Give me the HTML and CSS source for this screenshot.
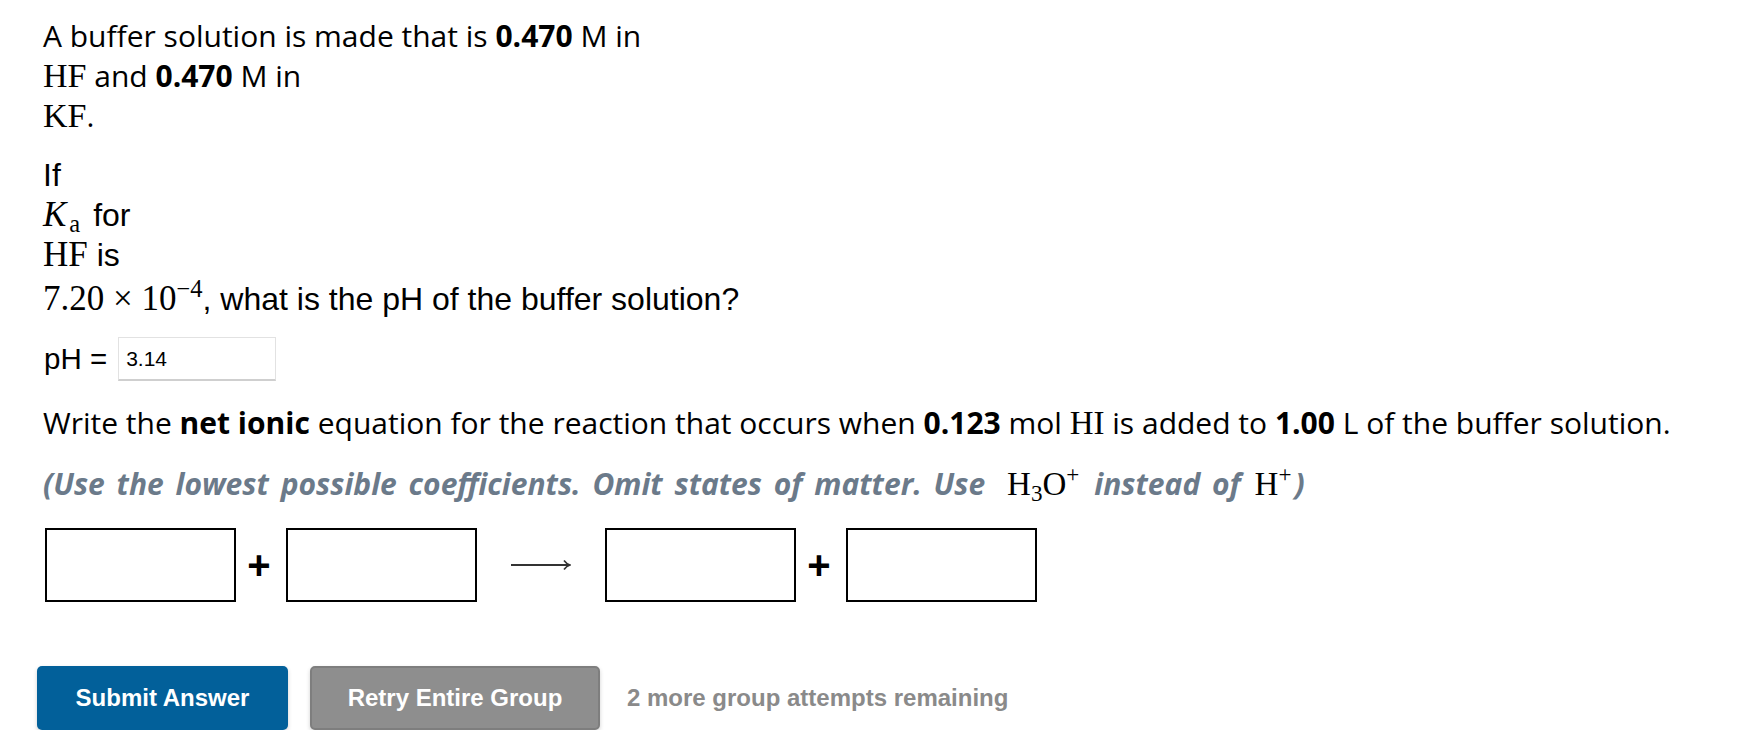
FILE: index.html
```html
<!DOCTYPE html>
<html>
<head>
<meta charset="utf-8">
<link rel="stylesheet" href="styles.css">
</head>
<body>
<div class="page">
  <div class="intro">
    <div class="line">A buffer solution is made that is <b>0.470</b> M in</div>
    <div class="line"><span class="m">HF</span> and <b>0.470</b> M in</div>
    <div class="line"><span class="m">KF</span>.</div>
  </div>
  <div class="question">
    <div class="line">If</div>
    <div class="line"><span class="mq"><i>K</i><sub>a</sub></span> for</div>
    <div class="line"><span class="mq">HF</span> is</div>
    <div class="line"><span class="mq">7.20 × 10<sup>−4</sup></span>, what is the pH of the buffer solution?</div>
  </div>
  <div class="phrow">
    <span class="phlabel">pH =</span>
    <span class="phinput">3.14</span>
  </div>
  <div class="write">Write the <b>net ionic</b> equation for the reaction that occurs when <b>0.123</b> mol <span class="mw">HI</span> is added to <b>1.00</b> L of the buffer solution.</div>
  <div class="hint">(Use the lowest possible coefficients. Omit states of matter. Use <span class="mh mh1">H<sub>3</sub>O<sup>+</sup></span>instead of <span class="mh mh2">H<sup>+</sup></span>)</div>
  <div class="equation">
    <div class="box"></div>
    <div class="plus">+</div>
    <div class="box"></div>
    <div class="arrow">
      <svg width="60" height="14" viewBox="0 0 60 14"><path d="M0 7 H58" stroke="#333" stroke-width="1.8" fill="none"/><path d="M53 2.5 Q55.5 6 59 7 Q55.5 8 53 11.5" stroke="#333" stroke-width="1.6" fill="none"/></svg>
    </div>
    <div class="box"></div>
    <div class="plus">+</div>
    <div class="box"></div>
  </div>
  <div class="actions">
    <div class="btn btn-submit">Submit Answer</div>
    <div class="btn btn-retry">Retry Entire Group</div>
    <div class="remaining">2 more group attempts remaining</div>
  </div>
</div>
</body>
</html>
```

FILE: styles.css
```css
html, body {
  margin: 0;
  padding: 0;
  background: #fff;
  color: #000;
}
.page {
  padding: 16px 0 0 43px;
  font-family: "Open Sans", "Noto Sans", sans-serif;
  font-size: 30px;
}
.line {
  height: 40px;
  line-height: 40px;
  white-space: nowrap;
}
b {
  font-weight: 700;
}
.m, .mq, .mw, .mh {
  font-family: "Liberation Serif", serif;
  font-style: normal;
  font-weight: 400;
  color: #000;
}
.m {
  font-size: 34px;
}
.mq {
  font-size: 35px;
}
.mw {
  font-size: 33px;
}
.mq i {
  padding-right: 3px;
}
.mq sub {
  padding-right: 4px;
}
sub, sup {
  font-size: 0.7em;
  line-height: 0;
}
sub {
  vertical-align: -0.25em;
}
sup {
  vertical-align: 0.55em;
}
.question {
  margin-top: 19px;
  font-family: "Liberation Sans", Arial, sans-serif;
  font-size: 32px;
}
.question .line:nth-child(4) {
  margin-top: 4px;
}
.phrow {
  margin-top: 18px;
  display: flex;
  align-items: center;
  font-family: "Liberation Sans", Arial, sans-serif;
  font-size: 29.5px;
}
.phlabel {
  margin-left: 1px;
}
.phinput {
  margin-left: 11px;
  box-sizing: border-box;
  width: 158px;
  height: 44px;
  border: 1px solid #e2e2e2;
  border-bottom: 2px solid #cfcfcf;
  font-size: 21px;
  line-height: 42px;
  padding-left: 7px;
}
.write {
  margin-top: 22px;
  line-height: 40px;
  white-space: nowrap;
}
.hint {
  margin-top: 21px;
  line-height: 40px;
  color: #6b7a8a;
  font-style: italic;
  font-weight: 700;
  white-space: nowrap;
  word-spacing: 4px;
}
.mh {
  font-size: 33px;
  word-spacing: 0;
}
.mh1 {
  margin: 0 15px 0 10px;
}
.mh2 {
  margin: 0 3px 0 2px;
}
.equation {
  margin-top: 24px;
  display: flex;
  align-items: center;
}
.box {
  box-sizing: border-box;
  width: 191px;
  height: 74px;
  border: 2.5px solid #000;
  margin-left: 2px;
}
.plus {
  width: 50px;
  text-align: center;
  font-family: "Liberation Sans", Arial, sans-serif;
  font-weight: 700;
  font-size: 40px;
  line-height: 40px;
  margin-left: -2px;
}
.arrow {
  width: 60px;
  height: 14px;
  margin: 0 32px 0 34px;
  display: flex;
}
.actions {
  margin-top: 64px;
  margin-left: -6px;
  display: flex;
  align-items: center;
  font-family: "Liberation Sans", Arial, sans-serif;
  font-weight: 700;
  font-size: 24px;
}
.btn {
  box-sizing: border-box;
  height: 64px;
  display: flex;
  align-items: center;
  justify-content: center;
  border-radius: 5px;
  color: #fff;
  box-shadow: 0 2px 4px rgba(0,0,0,0.18);
}
.btn-submit {
  width: 251px;
  background: #02609a;
}
.btn-retry {
  width: 290px;
  margin-left: 22px;
  background: #8e8e8e;
  border: 2px solid #7e7e7e;
}
.remaining {
  margin-left: 27px;
  color: #8a8a8a;
  font-size: 24px;
}
```
